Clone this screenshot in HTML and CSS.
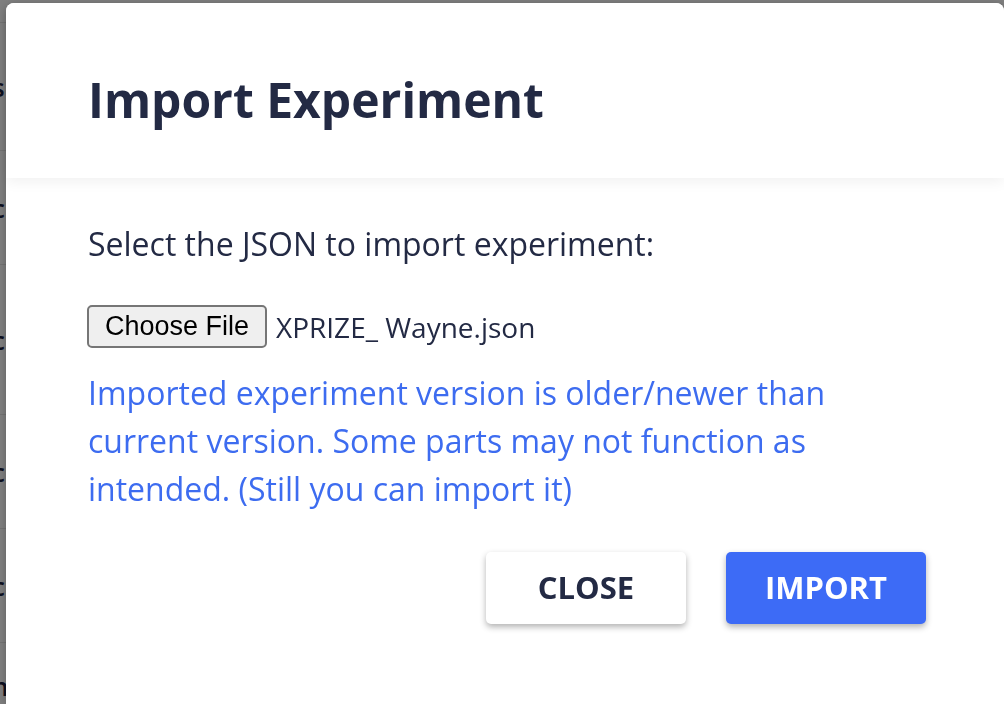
FILE: index.html
```html
<!DOCTYPE html>
<html lang="en">
<head>
<meta charset="utf-8">
<title>Import Experiment</title>
<link rel="stylesheet" href="styles.css">
</head>
<body>
<div class="page">
  <div class="topbar"></div>
  <div class="table">
    <div class="row row-head"><span class="cell">s</span></div>
    <div class="row"><span class="cell">c</span></div>
    <div class="row row-tall"><span class="cell">c</span></div>
    <div class="row"><span class="cell">c</span></div>
    <div class="row"><span class="cell">c</span></div>
    <div class="row row-last"><span class="cell">n</span></div>
  </div>
</div>
<div class="backdrop"></div>
<div class="modal">
  <div class="modal-header">
    <h1 class="modal-title">Import Experiment</h1>
  </div>
  <div class="modal-body">
    <p class="label">Select the JSON to import experiment:</p>
    <div class="file-row">
      <span class="file-button">Choose File</span>
      <span class="file-name">XPRIZE_ Wayne.json</span>
    </div>
    <p class="warning">Imported experiment version is older/newer than current version. Some parts may not function as intended. (Still you can import it)</p>
    <div class="actions">
      <button class="btn btn-close">CLOSE</button>
      <button class="btn btn-import">IMPORT</button>
    </div>
  </div>
</div>
</body>
</html>
```

FILE: styles.css
```css
html, body {
  margin: 0;
  padding: 0;
  width: 1004px;
  height: 704px;
  overflow: hidden;
  background: #ffffff;
  font-family: "Open Sans", "Liberation Sans", sans-serif;
}

.page {
  width: 1004px;
  height: 704px;
  overflow: hidden;
  background: #ffffff;
}

.topbar {
  height: 3px;
  background: #ffffff;
}

.table {
  display: flex;
  flex-direction: column;
  padding-top: 19px;
}

.row {
  height: 114px;
  border-top: 1px solid #e6e6e6;
  display: flex;
  align-items: center;
  box-sizing: border-box;
}

.row-head {
  height: 128px;
}

.row-tall {
  height: 150px;
}

.row-last {
  height: 62px;
  align-items: flex-end;
}

.cell {
  margin-left: -8px;
  font-size: 26px;
  font-weight: 600;
  color: #1b2140;
}

.backdrop {
  position: fixed;
  inset: 0;
  background: rgba(0, 0, 0, 0.5);
}

.modal {
  position: absolute;
  left: 6px;
  top: 3px;
  width: 998px;
  height: 701px;
  background: #ffffff;
  border-radius: 8px 8px 0 0;
  box-shadow: 0 2px 10px rgba(0, 0, 0, 0.25);
  display: flex;
  flex-direction: column;
}

.modal-header {
  height: 175px;
  display: flex;
  align-items: center;
  padding: 18px 0 0 82px;
  box-sizing: border-box;
  position: relative;
  z-index: 1;
  box-shadow: 0 4px 14px rgba(0, 0, 0, 0.06);
  border-radius: 8px 8px 0 0;
  background: #ffffff;
}

.modal-title {
  margin: 0;
  font-size: 48px;
  font-weight: 700;
  line-height: 1.2;
  color: #232a44;
}

.modal-body {
  padding: 48px 78px 0 82px;
}

.label {
  margin: 0;
  font-size: 32px;
  line-height: 36px;
  color: #232a44;
}

.file-row {
  display: flex;
  align-items: center;
  margin-top: 43px;
  gap: 9px;
}

.file-button {
  display: inline-flex;
  align-items: center;
  justify-content: center;
  box-sizing: border-box;
  height: 43px;
  width: 180px;
  margin-left: -1px;
  background: #efefef;
  border: 2px solid #767676;
  border-radius: 5px;
  font-family: "Liberation Sans", Arial, sans-serif;
  font-size: 27px;
  color: #000000;
}

.file-name {
  font-size: 28px;
  color: #232a44;
}

.warning {
  margin: 21px 0 0 0;
  font-size: 32px;
  line-height: 48px;
  color: #3d6cf0;
}

.actions {
  display: flex;
  justify-content: flex-end;
  gap: 40px;
  margin-top: 39px;
}

.btn {
  width: 200px;
  height: 72px;
  padding: 0 0 3px 0;
  border: none;
  border-radius: 5px;
  font-family: "Open Sans", "Liberation Sans", sans-serif;
  font-size: 31px;
  font-weight: 700;
  cursor: pointer;
  box-shadow: 0 3px 6px rgba(0, 0, 0, 0.3);
}

.btn-close {
  background: #ffffff;
  color: #232a44;
}

.btn-import {
  background: #3d6bf6;
  color: #ffffff;
}
```
